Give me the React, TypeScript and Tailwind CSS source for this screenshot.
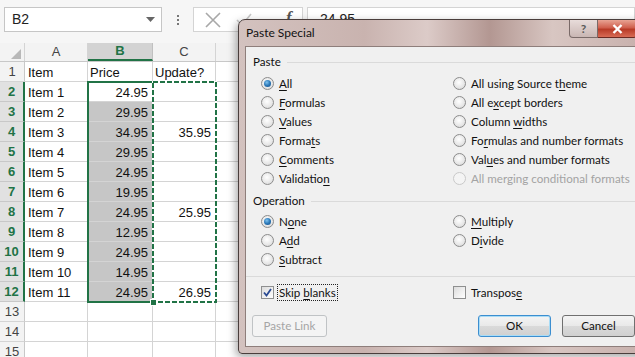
import React from "react";

const rows: [string, string, string][] = [
  ["Item", "Price", "Update?"],
  ["Item 1", "24.95", ""],
  ["Item 2", "29.95", ""],
  ["Item 3", "34.95", "35.95"],
  ["Item 4", "29.95", ""],
  ["Item 5", "24.95", ""],
  ["Item 6", "19.95", ""],
  ["Item 7", "24.95", "25.95"],
  ["Item 8", "12.95", ""],
  ["Item 9", "24.95", ""],
  ["Item 10", "14.95", ""],
  ["Item 11", "24.95", "26.95"],
  ["", "", ""],
  ["", "", ""],
  ["", "", ""],
];

// underline the access key at index i
function ak(text: string, i: number) {
  if (i < 0) return text;
  return (
    <>
      {text.slice(0, i)}
      <u className="underline-offset-2">{text[i]}</u>
      {text.slice(i + 1)}
    </>
  );
}

function Radio({ checked, disabled }: { checked?: boolean; disabled?: boolean }) {
  return (
    <span
      className={
        "w-[13px] h-[13px] shrink-0 rounded-full border flex items-center justify-center " +
        (disabled
          ? "border-[#c9c9c9] bg-[#f4f4f4]"
          : "border-[#8c8c8c] bg-[radial-gradient(circle_at_45%_40%,#ffffff_0%,#e6e6e6_60%,#cfcfcf_100%)]")
      }
    >
      {checked && (
        <span className="w-[7px] h-[7px] rounded-full bg-[radial-gradient(circle_at_40%_35%,#7fc3f0_0%,#2b78b8_50%,#124c86_100%)]" />
      )}
    </span>
  );
}

function Check({ checked }: { checked?: boolean }) {
  return (
    <span className="w-[13px] h-[13px] shrink-0 border border-[#8e8f8f] bg-[linear-gradient(135deg,#dcdcdc,#ffffff)] flex items-center justify-center">
      {checked && (
        <svg width="9" height="9" viewBox="0 0 9 9">
          <path d="M1 4.5 L3.5 7.5 L8 1" fill="none" stroke="#2a4a92" strokeWidth="1.8" />
        </svg>
      )}
    </span>
  );
}

function Opt({
  label,
  k,
  checked,
  disabled,
}: {
  label: string;
  k: number;
  checked?: boolean;
  disabled?: boolean;
}) {
  return (
    <div className="h-[19px] flex items-center gap-[5px] whitespace-nowrap">
      <Radio checked={checked} disabled={disabled} />
      <span className={disabled ? "text-[#a3a3a3]" : "text-[#111]"}>{ak(label, k)}</span>
    </div>
  );
}

function GroupLabel({ text }: { text: string }) {
  return (
    <div className="h-[16px] flex items-center gap-[6px] pl-[7px]">
      <span className="text-[#111]">{text}</span>
      <span className="flex-1 h-px bg-[#dadada]" />
    </div>
  );
}

function Sheet() {
  return (
    <div className="flex flex-col">
      {/* formula bar */}
      <div className="h-[43px] bg-[#f6f6f6] flex items-start pt-[7px] pl-[4px]">
        <div className="w-[158px] h-[25px] bg-white border border-[#c6c6c6] flex items-center pl-[7px] pr-[6px] text-[14px] text-[#222]">
          <span className="flex-1">B2</span>
          <svg width="9" height="5" viewBox="0 0 9 5">
            <path d="M0 0 H9 L4.5 5 Z" fill="#666" />
          </svg>
        </div>
        <div className="w-[31px] h-[25px] flex flex-col items-center justify-center gap-[2px]">
          <span className="w-[2px] h-[2px] bg-[#777]" />
          <span className="w-[2px] h-[2px] bg-[#777]" />
          <span className="w-[2px] h-[2px] bg-[#777]" />
        </div>
        <div className="w-[110px] h-[25px] bg-white border border-[#d4d4d4] flex items-center pl-[10px] gap-[14px]">
          <svg width="18" height="16" viewBox="0 0 18 16">
            <path d="M2 1 L16 15 M16 1 L2 15" stroke="#a8a8a8" strokeWidth="1.6" />
          </svg>
          <svg width="16" height="14" viewBox="0 0 16 14">
            <path d="M1 7 L6 12 L15 1" fill="none" stroke="#c8c8c8" strokeWidth="1.6" />
          </svg>
          <span className="ml-[20px] font-['Liberation_Serif',serif] italic font-bold text-[17px] text-[#555] -mt-[4px]">
            f
          </span>
        </div>
        <div className="ml-[4px] flex-1 h-[25px] bg-white border border-[#d4d4d4] pl-[12px] flex items-center text-[14px] text-[#222]">
          24.95
        </div>
      </div>

      {/* column headers */}
      <div className="flex h-[19px] bg-[#f3f3f3] text-[13px] text-[#444] border-b border-[#c8c8c8]">
        <div className="w-[25px] border-r border-[#d4d4d4] flex items-end justify-end pr-[3px] pb-[2px]">
          <svg width="10" height="10" viewBox="0 0 10 10">
            <path d="M10 0 V10 H0 Z" fill="#b8b8b8" />
          </svg>
        </div>
        <div className="w-[63px] border-r border-[#d4d4d4] flex items-center justify-center">A</div>
        <div className="w-[65px] border-r border-[#c0c0c0] bg-[#d3d3d3] border-b-2 border-b-[#217346] flex items-center justify-center font-bold text-[#217346]">
          B
        </div>
        <div className="w-[63px] border-r border-[#d4d4d4] flex items-center justify-center">C</div>
        <div className="flex-1" />
      </div>

      {/* rows */}
      {rows.map((r, i) => {
        const n = i + 1;
        const sel = n >= 2 && n <= 12;
        return (
          <div key={i} className="flex h-[20px] text-[13px] text-[#111]">
            <div
              className={
                "w-[25px] border-b flex items-center justify-center " +
                (sel
                  ? "bg-[#e1e1e1] text-[#217346] font-bold border-r-2 border-r-[#217346] border-b-[#c8c8c8]"
                  : "bg-[#f3f3f3] text-[#444] border-r border-r-[#c8c8c8] border-b-[#d4d4d4]")
              }
            >
              {n}
            </div>
            <div className="w-[63px] border-r border-b border-[#d4d4d4] flex items-center pl-[3px] pt-[2px]">
              {r[0]}
            </div>
            <div
              className={
                "w-[65px] border-r border-b border-[#d4d4d4] flex items-center pt-[2px] " +
                (n === 1 ? "pl-[2px] " : "justify-end pr-[4px] ") +
                (n >= 3 && n <= 12 ? "bg-[#c6c6c6] border-[#bdbdbd]" : "")
              }
            >
              {r[1]}
            </div>
            <div
              className={
                "w-[63px] border-r border-b border-[#d4d4d4] flex items-center pt-[2px] " +
                (n === 1 ? "pl-[2px]" : "justify-end pr-[4px]")
              }
            >
              {r[2]}
            </div>
            <div className="flex-1 border-b border-[#d4d4d4]" />
          </div>
        );
      })}
    </div>
  );
}

function Dialog() {
  const col1: [string, number, boolean?][] = [
    ["All", 0, true],
    ["Formulas", 0],
    ["Values", 0],
    ["Formats", 5],
    ["Comments", 0],
    ["Validation", 9],
  ];
  const col2: [string, number, boolean?][] = [
    ["All using Source theme", 18],
    ["All except borders", 5],
    ["Column widths", 7],
    ["Formulas and number formats", 2],
    ["Values and number formats", 3],
    ["All merging conditional formats", -1, true],
  ];
  return (
    <div className="absolute left-[238px] top-[19px] w-[420px] h-[335px] rounded-t-[7px] rounded-b-[4px] border border-[#4a3e3c] bg-[linear-gradient(90deg,#d3c2bf_0%,#c9b3af_30%,#dccbc8_45%,#b39792_60%,#d8c6c2_75%,#c5ada9_100%)] shadow-[-2px_3px_8px_rgba(0,0,0,0.35)] flex flex-col font-['Lato','Noto_Sans',sans-serif] text-[11.6px]">
      <div className="h-[26px] flex items-start">
        <span className="pl-[7px] pt-[4px] text-[12px] text-[#111]">Paste Special</span>
        <div className="ml-auto mr-[20px] flex">
          <div className="w-[29px] h-[18px] rounded-bl-[4px] border border-t-0 border-[#7a6a68] bg-[linear-gradient(180deg,#e8dcda,#c9b6b3)] flex items-center justify-center text-[12px] font-bold text-[#5a5a5a]">
            ?
          </div>
          <div className="w-[39px] h-[18px] rounded-br-[4px] border border-t-0 border-l-0 border-[#6b2a22] bg-[linear-gradient(180deg,#e8a393_0%,#d0604e_45%,#b83b27_55%,#d86b55_100%)] flex items-center justify-center">
            <svg width="11" height="10" viewBox="0 0 11 10">
              <path d="M1.5 1 L9.5 9 M9.5 1 L1.5 9" stroke="#ffffff" strokeWidth="2.4" />
            </svg>
          </div>
        </div>
      </div>
      <div className="flex-1 ml-[6px] mb-[6px] border border-[#8e7e7b] bg-[#f0f0f0] flex flex-col pt-[7px]">
        <GroupLabel text="Paste" />
        <div className="mt-[4px] grid grid-cols-[192px_1fr] pl-[15px]">
          <div className="flex flex-col">
            {col1.map(([l, k, c]) => (
              <Opt key={l} label={l} k={k} checked={c} />
            ))}
          </div>
          <div className="flex flex-col">
            {col2.map(([l, k, d]) => (
              <Opt key={l} label={l} k={k} disabled={d} />
            ))}
          </div>
        </div>
        <div className="mt-[5px]">
          <GroupLabel text="Operation" />
        </div>
        <div className="mt-[3px] grid grid-cols-[192px_1fr] pl-[15px]">
          <div className="flex flex-col">
            <Opt label="None" k={1} checked />
            <Opt label="Add" k={1} />
            <Opt label="Subtract" k={0} />
          </div>
          <div className="flex flex-col">
            <Opt label="Multiply" k={0} />
            <Opt label="Divide" k={1} />
          </div>
        </div>
        <div className="mt-[7px] h-px bg-[#dadada]" />
        <div className="mt-[6px] grid grid-cols-[192px_1fr] pl-[15px]">
          <div className="h-[19px] flex items-center gap-[3px]">
            <Check checked />
            <span className="border border-dotted border-[#222] px-[1px] leading-[15px] text-[#111]">
              {ak("Skip blanks", 5)}
            </span>
          </div>
          <div className="h-[19px] flex items-center gap-[5px]">
            <Check />
            <span className="text-[#111]">{ak("Transpose", 8)}</span>
          </div>
        </div>
        <div className="mt-[13px] flex pl-[6px]">
          <div className="w-[75px] h-[22px] rounded-[3px] border border-[#c0c3c5] bg-[#f4f4f4] flex items-center justify-center text-[#a5a5a5]">
            Paste Link
          </div>
          <div className="ml-[151px] w-[73px] h-[22px] rounded-[3px] border border-[#3c8ed0] shadow-[inset_0_0_0_1px_#a9dcf6] bg-[linear-gradient(180deg,#f4f4f4_0%,#e9e9e9_50%,#dadada_51%,#d0d0d0_100%)] flex items-center justify-center text-[#111]">
            OK
          </div>
          <div className="ml-[11px] w-[73px] h-[22px] rounded-[3px] border border-[#707070] bg-[linear-gradient(180deg,#f4f4f4_0%,#e9e9e9_50%,#dadada_51%,#d0d0d0_100%)] flex items-center justify-center text-[#111]">
            Cancel
          </div>
        </div>
      </div>
    </div>
  );
}

export default function App() {
  return (
    <div className="relative w-[635px] h-[357px] overflow-hidden bg-white font-['Liberation_Sans',Arial,sans-serif]">
      <Sheet />
      {/* selection B2:B12 */}
      <div className="absolute left-[87px] top-[81px] w-[67px] h-[222px] border-2 border-[#217346]" />
      {/* copy marquee C2:C12 */}
      <svg className="absolute left-[152px] top-[81px]" width="66" height="223" viewBox="0 0 66 223">
        <rect x="1" y="1" width="63" height="220" fill="none" stroke="#ffffff" strokeWidth="2" />
        <rect x="1" y="1" width="63" height="220" fill="none" stroke="#217346" strokeWidth="2" strokeDasharray="5 2" />
      </svg>
      <div className="absolute left-[150px] top-[299px] w-[7px] h-[7px] bg-[#217346] border border-white" />
      <Dialog />
    </div>
  );
}
